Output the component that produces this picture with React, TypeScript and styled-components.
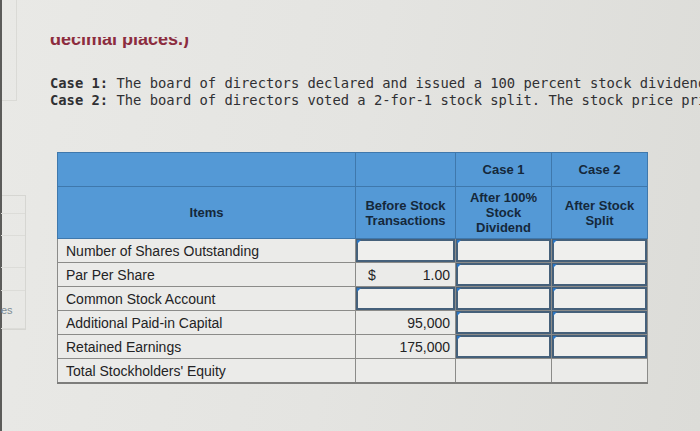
import React from "react";
import styled, { createGlobalStyle } from "styled-components";

const Global = createGlobalStyle`
  html, body { margin: 0; padding: 0; }
  body {
    width: 700px;
    height: 431px;
    overflow: hidden;
    background: linear-gradient(100deg, #e9e9e6 0%, #e4e4e1 50%, #dcdcd8 100%);
    font-family: "Liberation Sans", Arial, sans-serif;
  }
`;

const Page = styled.div`
  display: flex;
  width: 700px;
  height: 431px;
  overflow: hidden;
`;

const Sidebar = styled.div`
  width: 24px;
  flex: none;
  border-left: 2px solid #5c5c5a;
  display: flex;
  flex-direction: column;
`;

const SideTop = styled.div`
  height: 100px;
  width: 14px;
  border-right: 1px solid #dadad6;
  border-bottom: 1px solid #dadad6;
`;

const SideBox = styled.div`
  margin-top: 94px;
  height: 133px;
  border: 1px solid #d6d6d2;
  border-left: none;
  display: grid;
  grid-template-rows: 18px 22px 32px 23px 1fr;
`;

const SideRow = styled.div`
  border-bottom: 1px solid #dcdcd8;
  font-family: "Liberation Sans", Arial, sans-serif;
  font-size: 11px;
  color: #7d8c94;
  display: flex;
  align-items: center;
  margin-left: -1px;
`;

const Main = styled.div`
  flex: 1;
  padding-left: 24px;
  padding-top: 37px;
  min-width: 0;
`;

const Clip = styled.div`
  height: 11px;
  overflow: hidden;
`;

const Crimson = styled.div`
  margin-top: -7px;
  font-family: "Liberation Sans", Arial, sans-serif;
  font-weight: bold;
  font-size: 18px;
  line-height: 18px;
  color: #8c2c3e;
  white-space: nowrap;
`;

const Cases = styled.div`
  margin-top: 27px;
  font-family: "DejaVu Sans Mono", "Liberation Mono", monospace;
  font-size: 13.8px;
  line-height: 17px;
  color: #303033;
  white-space: nowrap;
`;

const CaseLine = styled.div``;

const Table = styled.table`
  margin-top: 43px;
  margin-left: 7px;
  border-collapse: collapse;
  table-layout: fixed;
  width: 590px;
  border-bottom: 2px solid #7d7d7b;
`;

const Th = styled.th<{ $h: number }>`
  height: ${(p) => p.$h}px;
  padding: 0 4px;
  background: #5499d6;
  border: 1px solid #3f78ac;
  color: #15283b;
  font-family: "Liberation Sans", Arial, sans-serif;
  font-weight: bold;
  font-size: 13px;
  line-height: 15px;
  text-align: center;
  vertical-align: middle;
`;

const Td = styled.td`
  height: 23px;
  padding: 0;
  border: 1px solid #8b8b89;
  background: #ebebe9;
  font-family: "Liberation Sans", Arial, sans-serif;
  font-size: 14px;
  color: #232325;
  vertical-align: middle;
`;

const Label = styled.div`
  padding-left: 8px;
  white-space: nowrap;
`;

const InputBox = styled.div`
  position: relative;
  height: 19px;
  border: 2px solid #45607a;
  background: #efefed;
  &::before {
    content: "";
    position: absolute;
    left: -1px;
    top: -1px;
    border-top: 4px solid #2b74c0;
    border-right: 4px solid transparent;
  }
`;

const Value = styled.div<{ $split?: boolean }>`
  display: flex;
  justify-content: ${(p) => (p.$split ? "space-between" : "flex-end")};
  padding: 0 5px 0 12px;
  line-height: 20px;
`;

type Cell = { kind: "input" } | { kind: "value"; text: string; dollar?: boolean } | { kind: "empty" };

const rows: { label: string; before: Cell; c1: Cell; c2: Cell }[] = [
  { label: "Number of Shares Outstanding", before: { kind: "input" }, c1: { kind: "input" }, c2: { kind: "input" } },
  { label: "Par Per Share", before: { kind: "value", text: "1.00", dollar: true }, c1: { kind: "input" }, c2: { kind: "input" } },
  { label: "Common Stock Account", before: { kind: "input" }, c1: { kind: "input" }, c2: { kind: "input" } },
  { label: "Additional Paid-in Capital", before: { kind: "value", text: "95,000" }, c1: { kind: "input" }, c2: { kind: "input" } },
  { label: "Retained Earnings", before: { kind: "value", text: "175,000" }, c1: { kind: "input" }, c2: { kind: "input" } },
  { label: "Total Stockholders' Equity", before: { kind: "empty" }, c1: { kind: "empty" }, c2: { kind: "empty" } },
];

function CellView({ cell }: { cell: Cell }) {
  if (cell.kind === "input") return <Td><InputBox /></Td>;
  if (cell.kind === "value")
    return (
      <Td>
        <Value $split={cell.dollar}>
          {cell.dollar && <span>$</span>}
          <span>{cell.text}</span>
        </Value>
      </Td>
    );
  return <Td />;
}

export default function App() {
  return (
    <>
      <Global />
      <Page>
        <Sidebar>
          <SideTop />
          <SideBox>
            <SideRow />
            <SideRow />
            <SideRow />
            <SideRow />
            <SideRow>es</SideRow>
          </SideBox>
        </Sidebar>
        <Main>
          <Clip>
            <Crimson>decimal places.)</Crimson>
          </Clip>
          <Cases>
            <CaseLine>
              <b>Case 1:</b> The board of directors declared and issued a 100 percent stock dividend. The stock price
            </CaseLine>
            <CaseLine>
              <b>Case 2:</b> The board of directors voted a 2-for-1 stock split. The stock price prior to the split
            </CaseLine>
          </Cases>
          <Table>
            <colgroup>
              <col style={{ width: 298 }} />
              <col style={{ width: 100 }} />
              <col style={{ width: 96 }} />
              <col style={{ width: 96 }} />
            </colgroup>
            <thead>
              <tr>
                <Th $h={33} />
                <Th $h={33} />
                <Th $h={33}>Case 1</Th>
                <Th $h={33}>Case 2</Th>
              </tr>
              <tr>
                <Th $h={51}>Items</Th>
                <Th $h={51}>Before Stock Transactions</Th>
                <Th $h={51}>After 100% Stock Dividend</Th>
                <Th $h={51}>After Stock Split</Th>
              </tr>
            </thead>
            <tbody>
              {rows.map((r) => (
                <tr key={r.label}>
                  <Td>
                    <Label>{r.label}</Label>
                  </Td>
                  <CellView cell={r.before} />
                  <CellView cell={r.c1} />
                  <CellView cell={r.c2} />
                </tr>
              ))}
            </tbody>
          </Table>
        </Main>
      </Page>
    </>
  );
}
